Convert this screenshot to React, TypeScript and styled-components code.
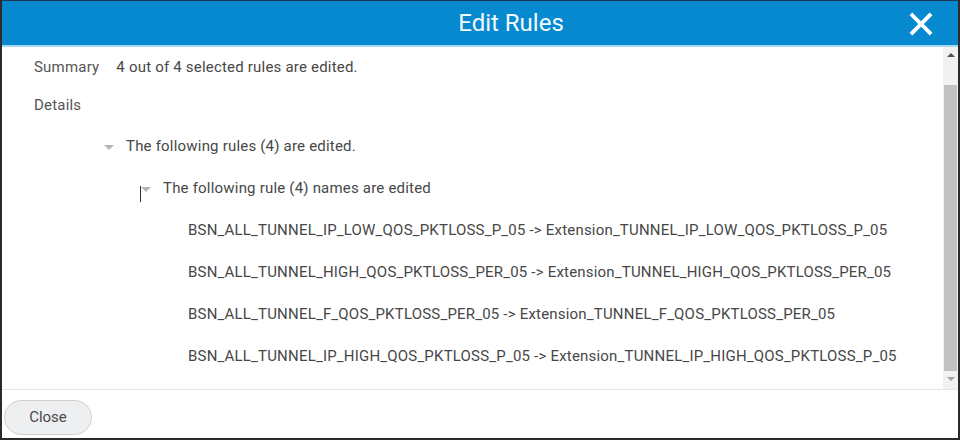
import React from "react";
import styled, { createGlobalStyle } from "styled-components";

const rules = [
  ["BSN_ALL_TUNNEL_IP_LOW_QOS_PKTLOSS_P_05", "Extension_TUNNEL_IP_LOW_QOS_PKTLOSS_P_05"],
  ["BSN_ALL_TUNNEL_HIGH_QOS_PKTLOSS_PER_05", "Extension_TUNNEL_HIGH_QOS_PKTLOSS_PER_05"],
  ["BSN_ALL_TUNNEL_F_QOS_PKTLOSS_PER_05", "Extension_TUNNEL_F_QOS_PKTLOSS_PER_05"],
  ["BSN_ALL_TUNNEL_IP_HIGH_QOS_PKTLOSS_P_05", "Extension_TUNNEL_IP_HIGH_QOS_PKTLOSS_P_05"],
];

const App = () => {
  return (
    <>
      <GlobalStyle />
      <Dialog>
        <Header>
          <Title>Edit Rules</Title>
          <CloseIcon viewBox="0 0 24 24">
            <path d="M4 4 L20 20 M20 4 L4 20" stroke="#fff" strokeWidth="3.6" strokeLinecap="square" />
          </CloseIcon>
        </Header>
        <Body>
          <Content>
            <InfoRow>
              <Label>Summary</Label>
              <span>4 out of 4 selected rules are edited.</span>
            </InfoRow>
            <InfoRow gap={10}>
              <Label>Details</Label>
            </InfoRow>
            <TreeRow indent={70}>
              <Caret />
              The following rules (4) are edited.
            </TreeRow>
            <TreeRow indent={107}>
              <Cursor />
              <Caret />
              The following rule (4) names are edited
            </TreeRow>
            {rules.map(([from, to]) => (
              <TreeRow indent={154} key={from}>
                {from} -&gt; {to}
              </TreeRow>
            ))}
          </Content>
          <Scrollbar>
            <Arrow dir="up" />
            <Thumb />
            <Arrow dir="down" />
          </Scrollbar>
        </Body>
        <Footer>
          <CloseButton>Close</CloseButton>
        </Footer>
      </Dialog>
    </>
  );
};

export default App;

const GlobalStyle = createGlobalStyle`
  html, body {
    margin: 0;
    padding: 0;
    background: #fff;
  }
  body {
    font-family: Roboto, "Liberation Sans", sans-serif;
  }
`;

const Dialog = styled.div`
  display: flex;
  flex-direction: column;
  width: 960px;
  height: 440px;
  box-sizing: border-box;
  border: 2px solid #2b2b2b;
  border-top: 1px solid #1c3550;
  background: #fff;
  overflow: hidden;
`;

const Header = styled.div`
  position: relative;
  display: flex;
  align-items: center;
  justify-content: center;
  height: 44px;
  flex-shrink: 0;
  background: #0689cf;
  border-bottom: 2px solid #a6d9f3;
  padding-left: 62px;
`;

const Title = styled.span`
  font-size: 24px;
  font-weight: 400;
  color: #f1f9fe;
`;

const CloseIcon = styled.svg`
  position: absolute;
  right: 24px;
  top: 10px;
  width: 26px;
  height: 26px;
`;

const Body = styled.div`
  display: flex;
  height: 342px;
  flex-shrink: 0;
  border-bottom: 1px solid #e6e6e6;
`;

const Content = styled.div`
  flex: 1;
  padding: 10px 0 0 32px;
  font-size: 15px;
  letter-spacing: 0.2px;
  color: #474747;
`;

const InfoRow = styled.div<{ gap?: number }>`
  display: flex;
  align-items: center;
  gap: 17px;
  height: 20px;
  line-height: 20px;
  margin-top: ${({ gap }) => (gap ? `${gap + 8}px` : "0")};
  margin-bottom: ${({ gap }) => (gap ? `${gap}px` : "0")};
`;

const Label = styled.span`
  color: #555;
`;

const TreeRow = styled.div<{ indent: number }>`
  position: relative;
  display: flex;
  align-items: center;
  height: 42px;
  padding-left: ${({ indent }) => indent}px;
  white-space: nowrap;
`;

const Caret = styled.span`
  width: 0;
  height: 0;
  margin: 2px 12px 0 0;
  border-left: 5px solid transparent;
  border-right: 5px solid transparent;
  border-top: 5px solid #b5b5b5;
`;

const Cursor = styled.span`
  position: absolute;
  left: 106px;
  top: 19px;
  width: 1px;
  height: 16px;
  background: #333;
`;

const Scrollbar = styled.div`
  display: flex;
  flex-direction: column;
  align-items: center;
  width: 15px;
  background: #f1f1f1;
`;

const Arrow = styled.span<{ dir: "up" | "down" }>`
  width: 0;
  height: 0;
  margin: 6px 0 8px;
  border-left: 4px solid transparent;
  border-right: 4px solid transparent;
  ${({ dir }) =>
    dir === "up" ? "border-bottom: 4px solid #505050;" : "border-top: 4px solid #a3a3a3;"}
`;

const Thumb = styled.div`
  width: 13px;
  flex: 1;
  margin-top: 20px;
  background: #c1c1c1;
`;

const Footer = styled.div`
  flex: 1;
  display: flex;
  align-items: center;
  padding-left: 2px;
`;

const CloseButton = styled.button`
  width: 88px;
  height: 35px;
  border: 1px solid #d0d0d0;
  border-radius: 18px;
  background: #eeeff1;
  color: #4a4a4a;
  font-family: Roboto, "Liberation Sans", sans-serif;
  font-size: 15px;
  margin-top: 6px;
`;
